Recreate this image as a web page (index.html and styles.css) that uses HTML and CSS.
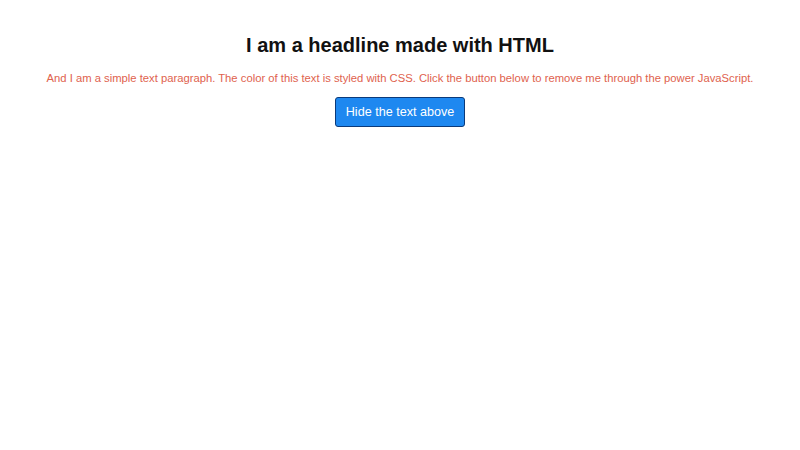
FILE: index.html
```html
<!DOCTYPE html>
<html lang="en">
<head>
    <meta charset="UTF-8">
    <meta name="viewport" content="width=device-width, initial-scale=1.0">
    <title>Hello HTML</title>
    <link rel="stylesheet" href="styles.css">
</head>
<body>
    <div class="container">
        <h1>I am a headline made with HTML</h1>
        <p id="text">And I am a simple text paragraph. The color of this text is styled with CSS. Click the button below to remove me through the power JavaScript.</p>
        <button onclick="hideText()">Hide the text above</button>
    </div>
    <script>
        function hideText() {
            document.getElementById("text").style.display = "none";
        }
    </script>
</body>
</html>
```

FILE: styles.css
```css
body {
    font-family: "Liberation Sans", Arial, sans-serif;
    margin: 0;
    padding: 8px;
    background-color: white;
}

.container {
    text-align: center;
    padding-top: 26px;
}

h1 {
    font-size: 20px;
    margin: 0 0 15px 0;
    color: #111;
}

p {
    color: #e0624e;
    font-size: 11.25px;
    margin: 0 0 13px 0;
}

button {
    background-color: #1e88f0;
    color: white;
    border: 1px solid #0b3a7a;
    border-radius: 3px;
    padding: 7px 10px;
    font-family: "Liberation Sans", Arial, sans-serif;
    font-size: 12.6px;
    cursor: pointer;
}

button:hover {
    background-color: #1570d0;
}
```
